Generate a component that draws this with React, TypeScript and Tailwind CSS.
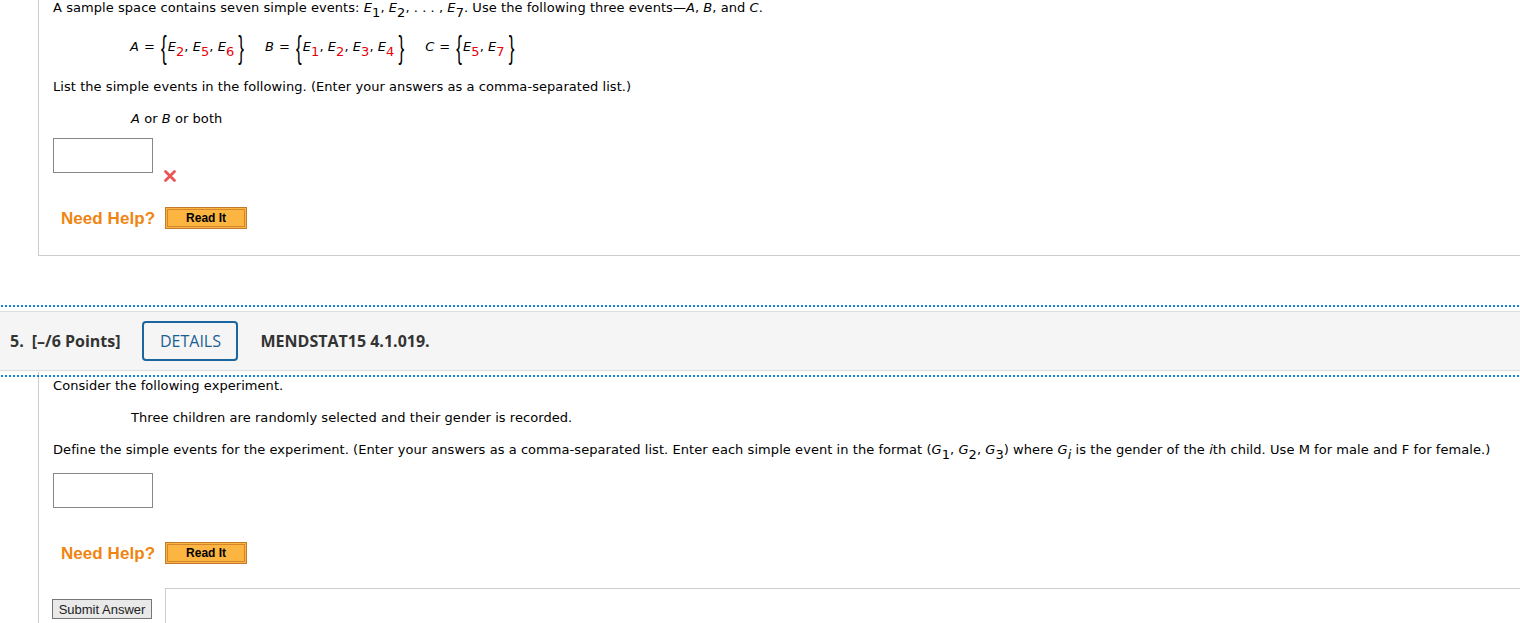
import type { ReactNode } from "react";

function Sub({ children, red }: { children: ReactNode; red?: boolean }) {
	return (
		<span
			className={`relative top-[5px] not-italic ${red ? "text-[#e8000b]" : ""}`}
		>
			{children}
		</span>
	);
}

function Brace({ children }: { children: ReactNode }) {
	return (
		<span className="mx-[1px] inline-block scale-y-[1.85] font-['Liberation_Sans',sans-serif] text-[17px] font-light leading-none">
			{children}
		</span>
	);
}

function E({ n, red }: { n: string; red?: boolean }) {
	return (
		<>
			<i>E</i>
			<Sub red={red}>{n}</Sub>
		</>
	);
}

function SetDef({ name, items }: { name: string; items: string[] }) {
	return (
		<span className="inline-flex items-center">
			<i>{name}</i>
			<span className="mx-[5px]">=</span>
			<Brace>{"{"}</Brace>
			<span className="mr-[3px] whitespace-pre">
				{items.map((n, i) => (
					<span key={n}>
						<E n={n} red />
						{i < items.length - 1 ? ", " : ""}
					</span>
				))}
			</span>
			<Brace>{"}"}</Brace>
		</span>
	);
}

function XMark() {
	return (
		<svg width="14" height="14" viewBox="0 0 14 14" className="mt-[31px] ml-[10px]">
			<path
				d="M2.5 2.5 L11.5 11.5 M11.5 2.5 L2.5 11.5"
				stroke="#ea5457"
				strokeWidth="2.8"
				strokeLinecap="round"
			/>
		</svg>
	);
}

function HelpRow({ className }: { className: string }) {
	return (
		<div className={`flex items-center pl-[8px] ${className}`}>
			<span className="font-['Liberation_Sans',sans-serif] text-[17px] font-bold leading-none text-[#ef8510]">
				Need Help?
			</span>
			<button className="ml-[10px] flex h-[22px] w-[82px] items-center justify-center border border-[#c47a2c] bg-[#fbb540] p-px">
				<span className="flex h-full w-full items-center justify-center border border-[#d4862f] font-['Liberation_Sans',sans-serif] text-[12px] font-bold tracking-normal text-black">
					Read It
				</span>
			</button>
		</div>
	);
}

export default function App() {
	return (
		<div className="h-[623px] overflow-hidden bg-white font-['DejaVu_Sans',sans-serif] text-[13px] leading-4 tracking-[0.06px] text-black">
			<section className="ml-[38px] border-b border-l border-[#ccc] pb-[26px] pl-[14px]">
				<p>
					A sample space contains seven simple events: <E n="1" />,{" "}
					<E n="2" />, . . . , <E n="7" />. Use the following three events—
					<i>A</i>, <i>B</i>, and <i>C</i>.
				</p>
				<div className="mt-[13px] ml-[77px] flex h-[36px] items-center gap-[20px]">
					<SetDef name="A" items={["2", "5", "6"]} />
					<SetDef name="B" items={["1", "2", "3", "4"]} />
					<SetDef name="C" items={["5", "7"]} />
				</div>
				<p className="mt-[14px]">
					List the simple events in the following. (Enter your answers as a
					comma-separated list.)
				</p>
				<p className="mt-[16px] ml-[78px]">
					<i>A</i> or <i>B</i> or both
				</p>
				<div className="mt-[11px] flex items-start">
					<input className="h-[35px] w-[100px] border border-[#888] bg-white" />
					<XMark />
				</div>
				<HelpRow className="mt-[24px]" />
			</section>

			<div className="mt-[55px] flex h-[60px] items-center border-y border-[#ddd] bg-[#f5f5f5] pl-[10px] font-['Open_Sans',sans-serif] text-[16px] tracking-normal text-[#333] outline-2 outline-offset-4 outline-[#1681d9] outline-dotted">
				<span className="font-bold">5.</span>
				<span className="ml-[8px] font-bold">[–/6 Points]</span>
				<span className="ml-[22px] flex h-[40px] w-[96px] items-center justify-center rounded-[4px] border-2 border-[#1b669f] text-[#1b5f93]">
					DETAILS
				</span>
				<span className="ml-[22px] font-bold">MENDSTAT15 4.1.019.</span>
			</div>

			<section className="mt-px ml-[38px] h-[260px] border-l border-[#ccc] pt-[6px] pl-[14px]">
				<p>Consider the following experiment.</p>
				<p className="mt-[16px] ml-[78px]">
					Three children are randomly selected and their gender is recorded.
				</p>
				<p className="mt-[16px]">
					Define the simple events for the experiment. (Enter your answers as
					a comma-separated list. Enter each simple event in the format (
					<i>G</i>
					<Sub>1</Sub>, <i>G</i>
					<Sub>2</Sub>, <i>G</i>
					<Sub>3</Sub>) where <i>G</i>
					<Sub>
						<i>i</i>
					</Sub>{" "}
					is the gender of the <i>i</i>th child. Use M for male and F for
					female.)
				</p>
				<input className="mt-[15px] block h-[35px] w-[100px] border border-[#888] bg-white" />
				<HelpRow className="mt-[34px]" />
				<div className="mt-[24px] flex items-start">
					<button className="-ml-px mt-[11px] h-[20px] w-[100px] border border-[#767676] bg-[#e9e9e9] font-['Liberation_Sans',sans-serif] text-[13px] leading-none tracking-normal text-[#222]">
						Submit Answer
					</button>
					<div className="ml-[13px] h-[60px] flex-1 border-t border-l border-[#ccc]" />
				</div>
			</section>
		</div>
	);
}
